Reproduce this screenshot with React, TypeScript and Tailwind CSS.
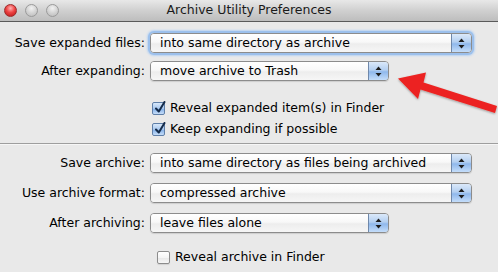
import React from "react";

const font = { fontFamily: '"DejaVu Sans", "Lucida Grande", sans-serif' };

function Arrows() {
  return (
    <svg width="7" height="11" viewBox="0 0 7 11">
      <polygon points="3.5,0.5 6.5,4 0.5,4" fill="#1d1d1d" />
      <polygon points="0.5,7 6.5,7 3.5,10.5" fill="#1d1d1d" />
    </svg>
  );
}

function Popup({ text, long, focused }: { text: string; long?: boolean; focused?: boolean }) {
  return (
    <div
      className={`flex h-[20px] rounded-[4px] border border-[#8c8c8c] overflow-hidden ${long ? "w-[322px]" : "w-[239px]"} ${
        focused ? "shadow-[0_0_0_2px_#9cc0ec,0_0_2px_3px_#b9d3f2]" : "shadow-[0_1px_1px_rgba(0,0,0,0.12)]"
      }`}
    >
      <div className="flex-1 flex items-center pl-[9px] text-[12.5px] text-black bg-[linear-gradient(to_bottom,#ffffff_0%,#f8f8f8_45%,#ededed_55%,#f6f6f6_100%)]">
        {text}
      </div>
      <div className="w-[20px] flex items-center justify-center border-l border-[#6f88aa] bg-[linear-gradient(to_bottom,#dbe9fa_0%,#b3cff1_45%,#8fb8ec_55%,#c4ddfa_100%)]">
        <Arrows />
      </div>
    </div>
  );
}

function Check({ checked }: { checked?: boolean }) {
  if (checked) {
    return (
      <div className="relative w-[13px] h-[13px] rounded-[2px] border border-[#5f7fa8] bg-[linear-gradient(to_bottom,#d8e8fa_0%,#a8c8ef_50%,#86b2e9_55%,#c6ddf8_100%)]">
        <svg className="absolute left-[1px] top-[-2px]" width="12" height="13" viewBox="0 0 12 13">
          <path d="M2 7.5 L4.8 10.5 L10.5 1" stroke="#142b4a" strokeWidth="2" fill="none" strokeLinecap="round" strokeLinejoin="round" />
        </svg>
      </div>
    );
  }
  return (
    <div className="w-[13px] h-[13px] rounded-[2px] border border-[#8c8c8c] bg-[linear-gradient(to_bottom,#ffffff_0%,#f5f5f5_50%,#e8e8e8_55%,#f7f7f7_100%)] shadow-[0_1px_1px_rgba(0,0,0,0.1)]" />
  );
}

function Row({ label, children }: { label: string; children: React.ReactNode }) {
  return (
    <div className="flex items-center">
      <div className="w-[146px] pr-[1px] text-right text-[12.5px] text-black whitespace-nowrap">{label}</div>
      <div className="ml-[4px]">{children}</div>
    </div>
  );
}

function CheckRow({ label, checked, offset }: { label: string; checked?: boolean; offset?: boolean }) {
  return (
    <div className={`flex items-center h-[21px] ${offset ? "pl-[157px]" : "pl-[152px]"}`}>
      <Check checked={checked} />
      <span className="ml-[5px] text-[12.5px] text-black">{label}</span>
    </div>
  );
}

export default function App() {
  return (
    <div className="relative w-[498px] h-[272px] overflow-hidden bg-[#e9e9e9]" style={font}>
      {/* Title bar */}
      <div className="relative h-[22px] border-b border-[#5a5a5a] bg-[linear-gradient(to_bottom,#e8e8e8_0%,#d0d0d0_50%,#bdbdbd_100%)] flex items-center justify-center">
        <div className="absolute left-[4px] top-[4px] flex gap-[8px]">
          <div className="w-[13px] h-[13px] rounded-full border border-[#9b2b2b] bg-[radial-gradient(circle_at_50%_30%,#ffb3b3_0%,#ee4444_45%,#b81414_100%)]" />
          <div className="w-[13px] h-[13px] rounded-full border border-[#9a9a9a] bg-[radial-gradient(circle_at_50%_30%,#f2f2f2_0%,#d4d4d4_50%,#b8b8b8_100%)]" />
          <div className="w-[13px] h-[13px] rounded-full border border-[#9a9a9a] bg-[radial-gradient(circle_at_50%_30%,#f2f2f2_0%,#d4d4d4_50%,#b8b8b8_100%)]" />
        </div>
        <div className="text-[12.5px] text-[#1a1a1a]">Archive Utility Preferences</div>
      </div>

      <div className="flex flex-col">
        <div className="mt-[11px]">
          <Row label="Save expanded files:">
            <Popup text="into same directory as archive" long focused />
          </Row>
        </div>
        <div className="mt-[8px]">
          <Row label="After expanding:">
            <Popup text="move archive to Trash" />
          </Row>
        </div>
        <div className="mt-[17px]">
          <CheckRow label="Reveal expanded item(s) in Finder" checked />
          <CheckRow label="Keep expanding if possible" checked />
        </div>
        <div className="mt-[3px] h-[1px] bg-[#9e9e9e]" />
        <div className="h-[1px] bg-[#f6f6f6]" />
        <div className="mt-[8px]">
          <Row label="Save archive:">
            <Popup text="into same directory as files being archived" long />
          </Row>
        </div>
        <div className="mt-[10px]">
          <Row label="Use archive format:">
            <Popup text="compressed archive" long />
          </Row>
        </div>
        <div className="mt-[10px]">
          <Row label="After archiving:">
            <Popup text="leave files alone" />
          </Row>
        </div>
        <div className="mt-[14px]">
          <CheckRow label="Reveal archive in Finder" offset />
        </div>
      </div>

      {/* Red annotation arrow */}
      <svg className="absolute left-0 top-0 pointer-events-none" width="498" height="272" viewBox="0 0 498 272">
        <defs>
          <filter id="sh" x="-20%" y="-20%" width="140%" height="140%">
            <feDropShadow dx="0" dy="1" stdDeviation="1" floodColor="#000" floodOpacity="0.35" />
          </filter>
        </defs>
        <polygon
          points="398,78.5 426,72.5 423.5,82.5 497,106 495,113 420.5,89.5 418,99"
          fill="#ec2420"
          filter="url(#sh)"
        />
      </svg>
    </div>
  );
}
